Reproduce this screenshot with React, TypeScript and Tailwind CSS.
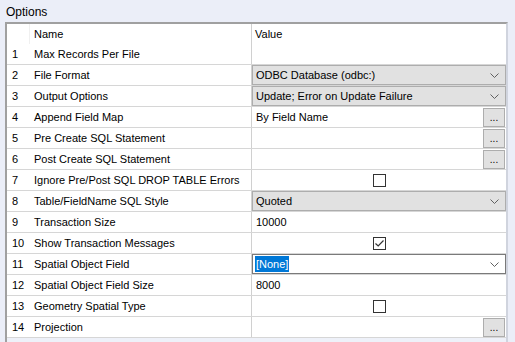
import React from "react";

type Kind = "text" | "combo" | "ellipsis" | "check" | "focus";

interface Row {
  n: number;
  name: string;
  value?: string;
  kind: Kind;
  checked?: boolean;
}

const rows: Row[] = [
  { n: 1, name: "Max Records Per File", kind: "text" },
  { n: 2, name: "File Format", value: "ODBC Database (odbc:)", kind: "combo" },
  { n: 3, name: "Output Options", value: "Update; Error on Update Failure", kind: "combo" },
  { n: 4, name: "Append Field Map", value: "By Field Name", kind: "ellipsis" },
  { n: 5, name: "Pre Create SQL Statement", kind: "ellipsis" },
  { n: 6, name: "Post Create SQL Statement", kind: "ellipsis" },
  { n: 7, name: "Ignore Pre/Post SQL DROP TABLE Errors", kind: "check" },
  { n: 8, name: "Table/FieldName SQL Style", value: "Quoted", kind: "combo" },
  { n: 9, name: "Transaction Size", value: "10000", kind: "text" },
  { n: 10, name: "Show Transaction Messages", kind: "check", checked: true },
  { n: 11, name: "Spatial Object Field", value: "[None]", kind: "focus" },
  { n: 12, name: "Spatial Object Field Size", value: "8000", kind: "text" },
  { n: 13, name: "Geometry Spatial Type", kind: "check" },
  { n: 14, name: "Projection", kind: "ellipsis" },
];

function Chevron() {
  return (
    <svg width="9" height="5" viewBox="0 0 9 5" className="shrink-0">
      <path d="M0.5 0.5 L4.5 4.5 L8.5 0.5" fill="none" stroke="#606060" strokeWidth="1" />
    </svg>
  );
}

function ValueCell({ row }: { row: Row }) {
  if (row.kind === "combo") {
    return (
      <div className="flex h-full items-center justify-between border border-[#adadad] bg-[#e1e1e1] pl-[3px] pr-[6px]">
        <span>{row.value}</span>
        <Chevron />
      </div>
    );
  }
  if (row.kind === "focus") {
    return (
      <div className="flex h-full items-center justify-between border border-[#7a7a7a] bg-white pl-[2px] pr-[6px]">
        <span className="bg-[#0078d7] px-[1px] text-white">{row.value}</span>
        <Chevron />
      </div>
    );
  }
  if (row.kind === "ellipsis") {
    return (
      <div className="flex h-full items-center justify-between pl-[4px] pr-[1px]">
        <span>{row.value}</span>
        <div className="flex h-[19px] w-[22px] items-end justify-center border border-[#adadad] bg-[#e1e1e1] pb-[3px] text-[10px] leading-none">
          ...
        </div>
      </div>
    );
  }
  if (row.kind === "check") {
    return (
      <div className="flex h-full items-center justify-center">
        <div className="flex h-[13px] w-[13px] items-center justify-center border border-[#333333] bg-white">
          {row.checked && (
            <svg width="9" height="7" viewBox="0 0 9 7">
              <path d="M0.5 3.5 L3.2 6 L8.5 0.5" fill="none" stroke="#333333" strokeWidth="1.2" />
            </svg>
          )}
        </div>
      </div>
    );
  }
  return (
    <div className="flex h-full items-center pl-[4px]">
      <span>{row.value}</span>
    </div>
  );
}

export default function App() {
  return (
    <div
      className="h-[342px] w-[515px] overflow-hidden whitespace-nowrap bg-[#ebeef8] text-[11px] text-black"
      style={{ fontFamily: '"Liberation Sans", Arial, sans-serif' }}
    >
      <div className="h-[22px] pl-[6px] pt-[5px] text-[12px] leading-[14px]">Options</div>
      <div className="ml-[5px] h-[330px] w-[503px] border-l-2 border-r-2 border-t-2 border-[#a0a0a0] border-r-[#d0d4de] bg-[#eef1f9]">
        <div className="flex h-[20px] bg-white">
          <div className="w-[22px]" />
          <div className="flex w-[222px] items-center border-l border-[#f0f0f0] pl-[4px]">Name</div>
          <div className="flex flex-1 items-center border-l border-[#d0d0d0] pl-[3px]">Value</div>
        </div>
        {rows.map((row) => (
          <div key={row.n} className="flex h-[21px] border-b border-[#d6d6d6] bg-white">
            <div className="flex w-[22px] items-center pl-[5px]">{row.n}</div>
            <div className="flex w-[222px] items-center pl-[5px]">{row.name}</div>
            <div className="flex-1 border-l border-[#d0d0d0]">
              <ValueCell row={row} />
            </div>
          </div>
        ))}
      </div>
    </div>
  );
}
